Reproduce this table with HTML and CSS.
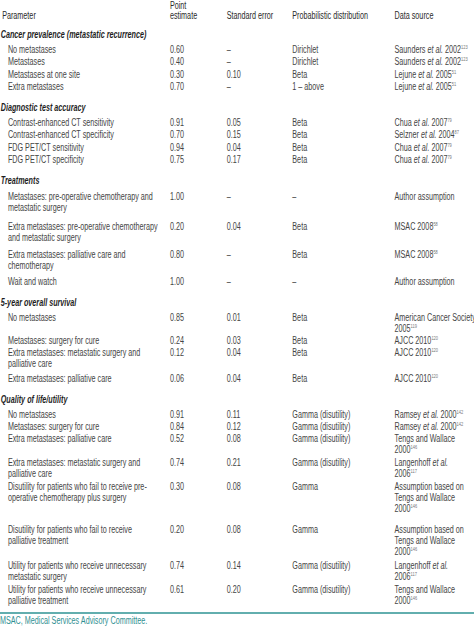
FILE: index.html
```html
<!DOCTYPE html>
<html>
<head>
<meta charset="utf-8">
<link rel="stylesheet" href="styles.css">
</head>
<body>
<div class="sheet">
<table class="tbl">
  <colgroup>
    <col class="c1"><col class="c2"><col class="c3"><col class="c4"><col class="c5">
  </colgroup>
  <thead>
    <tr>
      <th class="p0">Parameter</th>
      <th>Point<br>estimate</th>
      <th>Standard error</th>
      <th>Probabilistic distribution</th>
      <th>Data source</th>
    </tr>
  </thead>
  <tbody>
    <tr class="grp first"><td colspan="5">Cancer prevalence (metastatic recurrence)</td></tr>
    <tr><td class="par">No metastases</td><td>0.60</td><td>–</td><td>Dirichlet</td><td>Saunders <i>et al.</i> 2002<sup>123</sup></td></tr>
    <tr class="pb2"><td class="par">Metastases</td><td>0.40</td><td>–</td><td>Dirichlet</td><td>Saunders <i>et al.</i> 2002<sup>123</sup></td></tr>
    <tr><td class="par">Metastases at one site</td><td>0.30</td><td>0.10</td><td>Beta</td><td>Lejune <i>et al.</i> 2005<sup>51</sup></td></tr>
    <tr><td class="par">Extra metastases</td><td>0.70</td><td>–</td><td>1 – above</td><td>Lejune <i>et al.</i> 2005<sup>51</sup></td></tr>

    <tr class="grp"><td colspan="5">Diagnostic test accuracy</td></tr>
    <tr><td class="par">Contrast-enhanced CT sensitivity</td><td>0.91</td><td>0.05</td><td>Beta</td><td>Chua <i>et al.</i> 2007<sup>79</sup></td></tr>
    <tr class="pb2"><td class="par">Contrast-enhanced CT specificity</td><td>0.70</td><td>0.15</td><td>Beta</td><td>Selzner <i>et al.</i> 2004<sup>87</sup></td></tr>
    <tr><td class="par">FDG PET/CT sensitivity</td><td>0.94</td><td>0.04</td><td>Beta</td><td>Chua <i>et al.</i> 2007<sup>79</sup></td></tr>
    <tr><td class="par">FDG PET/CT specificity</td><td>0.75</td><td>0.17</td><td>Beta</td><td>Chua <i>et al.</i> 2007<sup>79</sup></td></tr>

    <tr class="grp g5"><td colspan="5">Treatments</td></tr>
    <tr class="pb8"><td class="par">Metastases: pre-operative chemotherapy and<br>metastatic surgery</td><td>1.00</td><td>–</td><td>–</td><td>Author assumption</td></tr>
    <tr class="pb6"><td class="par">Extra metastases: pre-operative chemotherapy<br>and metastatic surgery</td><td>0.20</td><td>0.04</td><td>Beta</td><td>MSAC 2008<sup>58</sup></td></tr>
    <tr class="pb5"><td class="par">Extra metastases: palliative care and<br>chemotherapy</td><td>0.80</td><td>–</td><td>Beta</td><td>MSAC 2008<sup>58</sup></td></tr>
    <tr><td class="par">Wait and watch</td><td>1.00</td><td>–</td><td>–</td><td>Author assumption</td></tr>

    <tr class="grp"><td colspan="5">5-year overall survival</td></tr>
    <tr><td class="par">No metastases</td><td>0.85</td><td>0.01</td><td>Beta</td><td>American Cancer Society<br>2005<sup>119</sup></td></tr>
    <tr><td class="par">Metastases: surgery for cure</td><td>0.24</td><td>0.03</td><td>Beta</td><td>AJCC 2010<sup>120</sup></td></tr>
    <tr class="pb4"><td class="par">Extra metastases: metastatic surgery and<br>palliative care</td><td>0.12</td><td>0.04</td><td>Beta</td><td>AJCC 2010<sup>120</sup></td></tr>
    <tr><td class="par">Extra metastases: palliative care</td><td>0.06</td><td>0.04</td><td>Beta</td><td>AJCC 2010<sup>120</sup></td></tr>

    <tr class="grp"><td colspan="5">Quality of life/utility</td></tr>
    <tr><td class="par">No metastases</td><td>0.91</td><td>0.11</td><td>Gamma (disutility)</td><td>Ramsey <i>et al.</i> 2000<sup>142</sup></td></tr>
    <tr><td class="par">Metastases: surgery for cure</td><td>0.84</td><td>0.12</td><td>Gamma (disutility)</td><td>Ramsey <i>et al.</i> 2000<sup>142</sup></td></tr>
    <tr class="pb2"><td class="par">Extra metastases: palliative care</td><td>0.52</td><td>0.08</td><td>Gamma (disutility)</td><td>Tengs and Wallace<br>2000<sup>146</sup></td></tr>
    <tr class="pb2"><td class="par">Extra metastases: metastatic surgery and<br>palliative care</td><td>0.74</td><td>0.21</td><td>Gamma (disutility)</td><td>Langenhoff <i>et al.</i><br>2006<sup>117</sup></td></tr>
    <tr class="pb10"><td class="par">Disutility for patients who fail to receive pre-<br>operative chemotherapy plus surgery</td><td>0.30</td><td>0.08</td><td>Gamma</td><td>Assumption based on<br>Tengs and Wallace<br>2000<sup>146</sup></td></tr>
    <tr class="pb3"><td class="par">Disutility for patients who fail to receive<br>palliative treatment</td><td>0.20</td><td>0.08</td><td>Gamma</td><td>Assumption based on<br>Tengs and Wallace<br>2000<sup>146</sup></td></tr>
    <tr class="pb2"><td class="par">Utility for patients who receive unnecessary<br>metastatic surgery</td><td>0.74</td><td>0.14</td><td>Gamma (disutility)</td><td>Langenhoff <i>et al.</i><br>2006<sup>117</sup></td></tr>
    <tr class="pb6"><td class="par">Utility for patients who receive unnecessary<br>palliative treatment</td><td>0.61</td><td>0.20</td><td>Gamma (disutility)</td><td>Tengs and Wallace<br>2000<sup>146</sup></td></tr>
  </tbody>
</table>
<p class="note">MSAC, Medical Services Advisory Committee.</p>
</div>
</body>
</html>
```

FILE: styles.css
```css
html, body {
  margin: 0;
  padding: 0;
  background: #fff;
  overflow: hidden;
}
body {
  font-family: "Liberation Sans", Arial, sans-serif;
  font-size: 10px;
  color: #454545;
}
.sheet {
  width: 659px;
  transform: scaleX(0.72);
  transform-origin: 0 0;
}
.tbl {
  width: 659px;
  border-collapse: collapse;
  table-layout: fixed;
}
.c1 { width: 236px; }
.c2 { width: 79px; }
.c3 { width: 91px; }
.c4 { width: 142px; }
.c5 { width: 111px; }
th {
  font-weight: normal;
  text-align: left;
  vertical-align: bottom;
  color: #2a2a2a;
  line-height: 10px;
  padding: 1px 0 0 0;
  white-space: nowrap;
}
th.p0 { padding-left: 3px; }
td {
  vertical-align: top;
  line-height: 11px;
  padding: 0 0 1px 0;
  white-space: nowrap;
}
td.par { padding-left: 11px; }
.grp td {
  font-weight: bold;
  font-style: italic;
  color: #1e1e1e;
  padding: 9px 0 4px 1px;
}
.grp.first td { padding-top: 8px; }
.grp.g5 td { padding-bottom: 5px; }
.pb2 td { padding-bottom: 2px; }
.pb3 td { padding-bottom: 3px; }
.pb4 td { padding-bottom: 4px; }
.pb5 td { padding-bottom: 5px; }
.pb6 td { padding-bottom: 6px; }
.pb8 td { padding-bottom: 8px; }
.pb10 td { padding-bottom: 10px; }
i { font-style: italic; }
sup {
  font-size: 5.5px;
  line-height: 0;
  vertical-align: 4px;
  color: #777;
}
.note {
  margin: 0;
  border-top: 2px solid #62aeae;
  color: #2f8f92;
  padding: 1px 0 0 0;
  line-height: 11px;
}
```
